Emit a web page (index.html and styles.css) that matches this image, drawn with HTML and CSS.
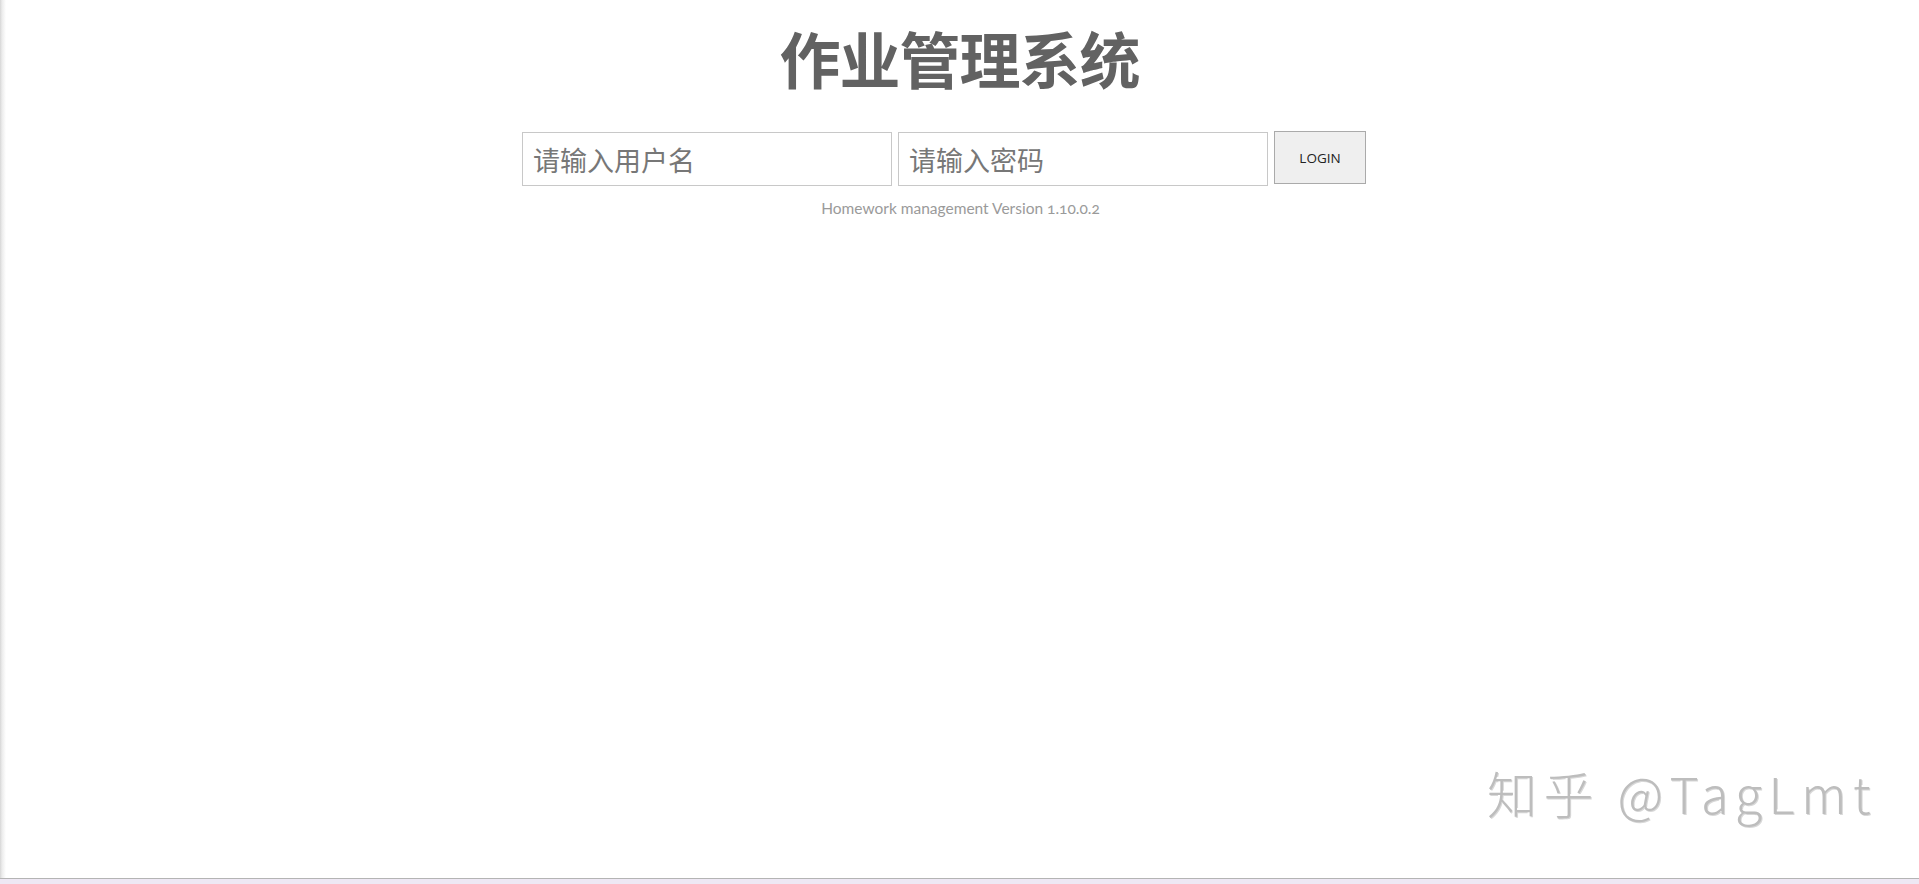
FILE: index.html
```html
<!DOCTYPE html>
<html lang="zh-CN">
<head>
<meta charset="utf-8">
<title>作业管理系统</title>
<link rel="stylesheet" href="styles.css">
</head>
<body>
<div class="screen">
  <main class="page">
    <h1 class="title">作业管理系统</h1>
    <form class="login">
      <input class="field" type="text" placeholder="请输入用户名">
      <input class="field" type="password" placeholder="请输入密码">
      <button class="btn" type="button">LOGIN</button>
    </form>
    <p class="version">Homework management Version 1.10.0.2</p>
  </main>
  <div class="taskbar"></div>
  <div class="watermark">知乎 @TagLmt</div>
</div>
</body>
</html>
```
FILE: styles.css
```css
html, body {
  margin: 0;
  padding: 0;
  background: #fff;
}
.screen {
  position: relative;
  height: 884px;
  display: flex;
  flex-direction: column;
  overflow: hidden;
  font-family: "Noto Sans CJK SC", "Noto Sans", sans-serif;
}
.page {
  flex: 1;
  display: flex;
  flex-direction: column;
  align-items: center;
  background: linear-gradient(to right, #d6d6d6 0, #ececec 2px, #fff 6px);
}
.title {
  margin: 28px 0 0;
  font-size: 61px;
  line-height: 60px;
  font-weight: 700;
  color: #626262;
  letter-spacing: -1px;
}
.login {
  display: flex;
  gap: 6px;
  margin-top: 43px;
  padding-right: 31px;
  align-items: flex-start;
}
.field {
  box-sizing: border-box;
  width: 370px;
  height: 54px;
  margin: 1px 0 0;
  padding: 0 10px;
  border: 1px solid #c8c8c8;
  border-radius: 0;
  outline: none;
  font-family: "Noto Sans CJK SC", sans-serif;
  font-size: 27px;
  color: #555;
  background: #fff;
}
.field::placeholder {
  color: #777;
}
.btn {
  box-sizing: border-box;
  width: 92px;
  height: 53px;
  margin: 0;
  border: 1px solid #aaa;
  border-radius: 0;
  background: #efefef;
  font-family: "Open Sans", "Liberation Sans", sans-serif;
  font-size: 13.5px;
  color: #222;
  padding: 0;
}
.version {
  margin: 12px 0 0;
  font-family: "Lato", "Open Sans", sans-serif;
  font-size: 15.5px;
  line-height: 20px;
  color: #9a9a9a;
  font-variant-numeric: oldstyle-nums;
  padding-left: 2px;
}
.taskbar {
  height: 5px;
  border-top: 1px solid #b4b4b4;
  background: #eee8f4;
}
.watermark {
  position: absolute;
  right: 42px;
  top: 762px;
  font-family: "Noto Sans CJK SC", "DejaVu Sans", sans-serif;
  font-size: 50px;
  font-weight: 300;
  line-height: 60px;
  letter-spacing: 6.5px;
  color: #bdbdbd;
  text-shadow: -2px -2px 0 #fff, 1px 1px 0 #d8d8d8;
  white-space: nowrap;
}
```
